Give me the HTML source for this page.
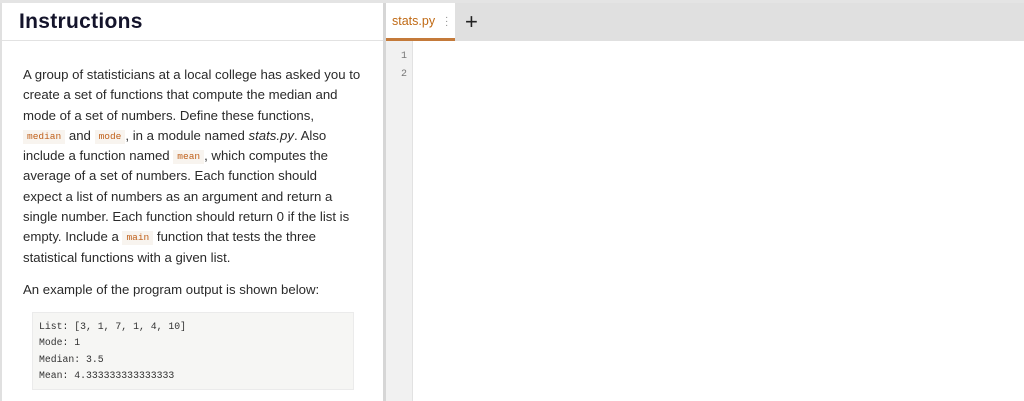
<!DOCTYPE html>
<html><head><style>
body{margin:0;width:1024px;height:401px;overflow:hidden;background:#fff;font-family:"Liberation Sans",sans-serif;position:relative}
.top{position:absolute;left:0;top:0;width:1024px;height:3px;background:#e4e4e4}
.left{position:absolute;left:0;top:3px;width:383px;height:398px;border-left:2px solid #e0e0e0;box-sizing:border-box;background:#fff}
.hdr{height:38px;border-bottom:1px solid #e2e2e2;box-sizing:border-box;padding-left:17px;font-weight:bold;font-size:21px;line-height:38px;color:#14142b;letter-spacing:0.3px}
.txt{position:absolute;left:23px;top:65px;width:360px;font-size:13.2px;color:#2a2a2a;white-space:nowrap}
.txt div{height:20.3px;line-height:20.3px}
code{font-family:"Liberation Mono",monospace;font-size:9.5px;line-height:10px;display:inline-block;color:#c0601a;background:#f8f4ef;padding:2px 4px;vertical-align:1px}
.ex{position:absolute;left:23px;top:282px;font-size:13.2px;color:#2a2a2a}
pre{position:absolute;left:32px;top:312px;width:322px;height:78px;margin:0;background:#f6f6f4;border:1px solid #ebebeb;box-sizing:border-box;padding:6px 0 0 6px;font-family:"Liberation Mono",monospace;font-size:9.8px;line-height:16.3px;color:#333}
.div{position:absolute;left:383px;top:3px;width:3px;height:398px;background:#d6d6d6}
.tabbar{position:absolute;left:386px;top:3px;width:638px;height:38px;background:#e0e0e0}
.tab{position:absolute;left:0;top:0;width:69px;height:38px;background:#fff;border-bottom:3px solid #c47a3a;box-sizing:border-box;font-size:12.5px;color:#c06a15;line-height:36px;padding-left:6px}
.dots{position:absolute;left:59px;top:13px;color:#888;font-size:10px;line-height:4px}
.plus{position:absolute;left:79px;top:4px;font-size:22px;color:#222;line-height:30px}
.gut{position:absolute;left:386px;top:41px;width:27px;height:360px;background:#f1f1f1;border-right:1px solid #e2e2e2;box-sizing:border-box;font-family:"Liberation Mono",monospace;font-size:10px;color:#777;text-align:right;padding-right:5px;padding-top:7px;line-height:18px}
</style></head><body>
<div class="top"></div>
<div class="left">
<div class="hdr">Instructions</div>
</div>
<div class="txt"><div>A group of statisticians at a local college has asked you to</div><div>create a set of functions that compute the median and</div><div>mode of a set of numbers. Define these functions,</div><div><code>median</code> and <code>mode</code>, in a module named <i>stats.py</i>. Also</div><div>include a function named <code>mean</code>, which computes the</div><div>average of a set of numbers. Each function should</div><div>expect a list of numbers as an argument and return a</div><div>single number. Each function should return 0 if the list is</div><div>empty. Include a <code>main</code> function that tests the three</div><div>statistical functions with a given list.</div></div>
<div class="ex">An example of the program output is shown below:</div>
<pre>List: [3, 1, 7, 1, 4, 10]
Mode: 1
Median: 3.5
Mean: 4.333333333333333</pre>
<div class="div"></div>
<div class="tabbar"><div class="tab">stats.py</div><div class="dots">·<br>·<br>·</div><div class="plus">+</div></div>
<div class="gut">1<br>2</div>
</body></html>
